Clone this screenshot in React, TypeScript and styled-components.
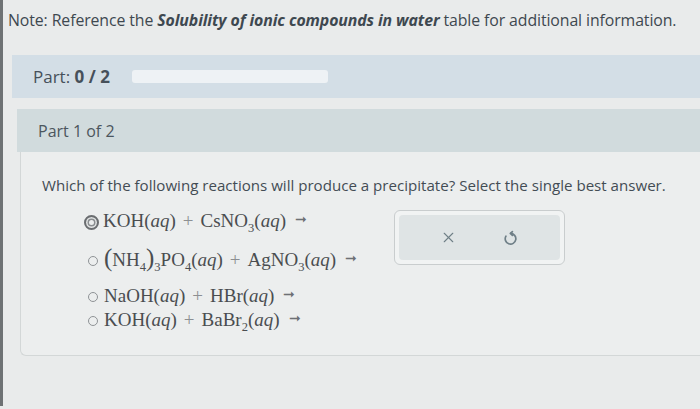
import React from 'react';
import styled, { createGlobalStyle } from 'styled-components';
import { X } from 'lucide-react';

const GlobalStyle = createGlobalStyle`
  html, body {
    margin: 0;
    padding: 0;
    background: #e9ebeb;
  }
  body {
    font-family: 'Open Sans', 'Liberation Sans', sans-serif;
  }
`;

const Page = styled.div`
  width: 700px;
  height: 406px;
  border-left: 3px solid #6e7274;
  box-sizing: border-box;
  background: #e9ebeb;
  overflow: hidden;
`;

const Note = styled.div`
  padding: 9px 0 0 5px;
  height: 46px;
  box-sizing: border-box;
  font-size: 15.85px;
  line-height: 22px;
  color: #3e4850;
  white-space: nowrap;
  letter-spacing: -0.1px;

  b {
    font-style: italic;
    font-weight: 700;
  }
`;

const PartBar = styled.div`
  margin: 9px 0 0 9px;
  height: 43px;
  background: #d3dee6;
  display: flex;
  align-items: center;
  padding-left: 21px;
  gap: 22px;
  font-size: 17px;
  color: #46505a;

  b {
    font-weight: 700;
  }
`;

const Progress = styled.div`
  width: 196px;
  height: 13px;
  border-radius: 3px;
  background: #eef2f5;
`;

const SectionBar = styled.div`
  margin: 11px 0 0 14px;
  height: 43px;
  background: #d1dbdd;
  display: flex;
  align-items: center;
  padding-left: 21px;
  font-size: 16px;
  color: #4c565e;
`;

const Card = styled.div`
  margin-left: 17px;
  height: 204px;
  box-sizing: border-box;
  border: 1px solid #d3d7d7;
  border-top: none;
  border-right: none;
  border-bottom-left-radius: 6px;
  background: #eceeee;
  padding: 23px 0 0 21px;
`;

const Question = styled.div`
  font-size: 15.1px;
  line-height: 20px;
  color: #434c54;
  white-space: nowrap;
`;

const Body = styled.div`
  display: flex;
  align-items: flex-start;
  margin-top: 10px;
`;

const Options = styled.div`
  width: 310px;
  padding-left: 42px;
  display: flex;
  flex-direction: column;
`;

const Option = styled.div<{ $h: number }>`
  display: flex;
  align-items: center;
  height: ${(p) => p.$h}px;
  white-space: nowrap;
`;

const Radio = styled.span<{ $selected?: boolean }>`
  display: inline-block;
  flex-shrink: 0;
  box-sizing: border-box;
  border-radius: 50%;
  ${(p) =>
    p.$selected
      ? `
    width: 15px;
    height: 15px;
    border: 2px solid #6a6d70;
    box-shadow: inset 0 0 0 1.5px #e4e6e6, inset 0 0 0 3px #8a8d90;
    margin-right: 4px;
  `
      : `
    width: 10px;
    height: 10px;
    border: 1px solid #8f9396;
    margin: 0 6px 0 4px;
  `}
`;

const Formula = styled.span`
  font-family: 'Liberation Serif', 'DejaVu Serif', serif;
  font-size: 19px;
  line-height: 22px;
  color: #4a4d50;

  i {
    font-style: italic;
  }
  sub {
    font-size: 12.5px;
    vertical-align: -5px;
    line-height: 0;
  }
`;

const Big = styled.span`
  font-size: 25px;
  line-height: 0;
  font-weight: 300;
`;

const Plus = styled.span`
  color: #8c8f92;
  margin: 0 7px;
`;

const Arrow = styled.span`
  color: #6d7074;
  font-size: 14px;
  margin-left: 9px;
  position: relative;
  top: -3px;
`;

const ActionBox = styled.div`
  margin-top: 5px;
  width: 171px;
  height: 55px;
  box-sizing: border-box;
  border: 1px solid #c9cdce;
  border-radius: 6px;
  padding: 4px;
  background: #f1f3f3;
`;

const ActionInner = styled.div`
  height: 100%;
  border-radius: 4px;
  background: #dfe4e5;
  display: flex;
  align-items: center;
  justify-content: space-around;
  padding: 0 18px;
  color: #6f7f87;
`;

const IconButton = styled.span`
  display: flex;
  align-items: center;
  justify-content: center;
  width: 20px;
  height: 20px;
`;

const UndoIcon: React.FC = () => (
  <svg width="17" height="17" viewBox="0 0 16 16" fill="none" stroke="currentColor" strokeWidth="1.6" strokeLinecap="round" strokeLinejoin="round">
    <path d="M8 4.2 A5 5 0 1 1 3.7 6.7" />
    <path d="M9.8 2.4 L8 4.2 L9.8 6" />
  </svg>
);

const App: React.FC = () => (
  <>
    <GlobalStyle />
    <Page>
      <Note>
        Note: Reference the <b>Solubility of ionic compounds in water</b> table for additional information.
      </Note>
      <PartBar>
        <span>
          Part: <b>0 / 2</b>
        </span>
        <Progress />
      </PartBar>
      <SectionBar>Part 1 of 2</SectionBar>
      <Card>
        <Question>
          Which of the following reactions will produce a precipitate? Select the single best answer.
        </Question>
        <Body>
          <Options>
            <Option $h={34}>
              <Radio $selected />
              <Formula>
                KOH(<i>aq</i>)<Plus>+</Plus>CsNO<sub>3</sub>(<i>aq</i>)<Arrow>➞</Arrow>
              </Formula>
            </Option>
            <Option $h={44}>
              <Radio />
              <Formula>
                <Big>(</Big>NH<sub>4</sub>
                <Big>)</Big>
                <sub>3</sub>PO<sub>4</sub>(<i>aq</i>)<Plus>+</Plus>AgNO<sub>3</sub>(<i>aq</i>)
                <Arrow>➞</Arrow>
              </Formula>
            </Option>
            <Option $h={28}>
              <Radio />
              <Formula>
                NaOH(<i>aq</i>)<Plus>+</Plus>HBr(<i>aq</i>)<Arrow>➞</Arrow>
              </Formula>
            </Option>
            <Option $h={20}>
              <Radio />
              <Formula>
                KOH(<i>aq</i>)<Plus>+</Plus>BaBr<sub>2</sub>(<i>aq</i>)<Arrow>➞</Arrow>
              </Formula>
            </Option>
          </Options>
          <ActionBox>
            <ActionInner>
              <IconButton>
                <X size={17} strokeWidth={1.6} />
              </IconButton>
              <IconButton>
                <UndoIcon />
              </IconButton>
            </ActionInner>
          </ActionBox>
        </Body>
      </Card>
    </Page>
  </>
);

export default App;
